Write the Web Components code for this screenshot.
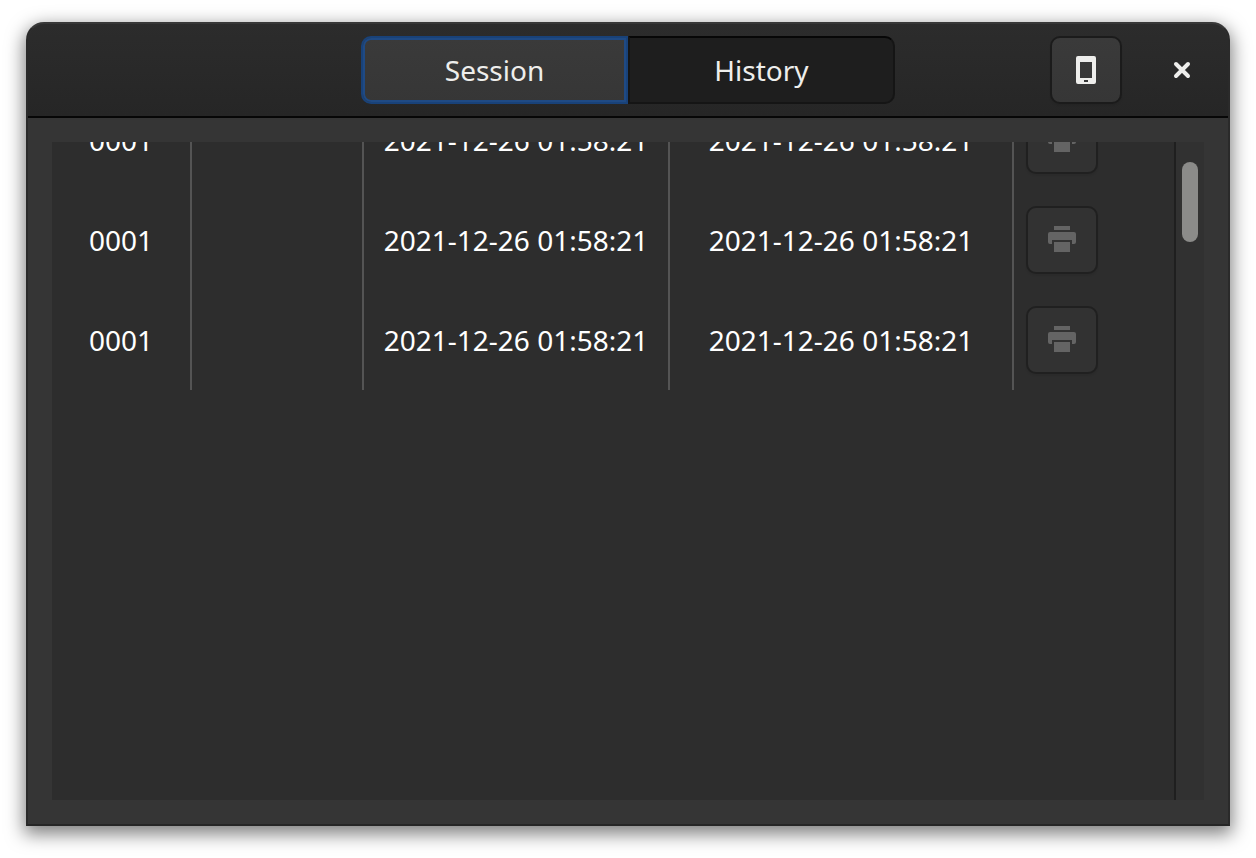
<!DOCTYPE html>
<html lang="en">
<head>
<meta charset="utf-8">
<title>Sessions</title>
<style>
    body {
        margin: 0;
        background: white;
        font-family: "Noto Sans", "Open Sans", sans-serif;
        font-size: 28px;
        line-height: 40px;
        color: white;
    }
</style>
</head>
<body>

<app-window>
    <view-switcher slot="title"></view-switcher>
    <icon-button slot="actions" name="phone" label="Devices"></icon-button>
    <icon-button slot="actions" name="close" label="Close" flat></icon-button>
    <scroll-panel offset="52">
        <session-table></session-table>
    </scroll-panel>
</app-window>

<script>
const windowTemplate = document.createElement("template");
windowTemplate.innerHTML = `
    <style>
        :host {
            display: flex;
            flex-direction: column;
            box-sizing: border-box;
            min-height: calc(100vh - 54px);
            margin: 22px 26px 32px;
            border: 2px solid #2a2a2a;
            border-top-color: #383838;
            border-bottom-color: #262626;
            border-radius: 18px 18px 0 0;
            background: #353535;
            box-shadow: 0 6px 18px 2px rgba(0, 0, 0, .5);
        }

        header {
            display: grid;
            grid-template-columns: 1fr auto 1fr;
            align-items: center;
            padding: 12px;
            border-bottom: 2px solid #070707;
            border-radius: 16px 16px 0 0;
            background: linear-gradient(#2c2c2c, #262626);
        }

        .title {
            grid-column: 2;
        }

        .actions {
            display: flex;
            justify-content: flex-end;
            gap: 26px;
        }

        main {
            display: flex;
            flex: 1;
            padding: 24px;
        }
    </style>
    <header>
        <div class="title"><slot name="title"></slot></div>
        <div class="actions"><slot name="actions"></slot></div>
    </header>
    <main><slot></slot></main>
`

class AppWindow extends HTMLElement {
    constructor() {
        super();
        this.attachShadow({ mode: "open" });
        this.shadowRoot.appendChild(windowTemplate.content.cloneNode(true));
    }
}

const switcherTemplate = document.createElement("template");
switcherTemplate.innerHTML = `
    <style>
        :host {
            display: grid;
            grid-template-columns: 1fr 1fr;
        }

        button {
            box-sizing: border-box;
            min-width: 267px;
            height: 68px;
            padding: 0 16px;
            border: 2px solid #151515;
            border-top-color: #070707;
            background: #1e1e1e;
            color: #eeeeec;
            font: inherit;
            cursor: pointer;
        }

        button:first-of-type {
            border-radius: 10px 0 0 10px;
        }

        button:last-of-type {
            border-radius: 0 10px 10px 0;
        }

        button[aria-pressed="true"] {
            border: 2px solid #194279;
            background: linear-gradient(#3a3a3a, #363636);
            box-shadow: inset 0 0 0 2px #1f4a84;
        }
    </style>
    <button type="button" aria-pressed="true">Session</button>
    <button type="button" aria-pressed="false">History</button>
`

class ViewSwitcher extends HTMLElement {
    constructor() {
        super();
        this.attachShadow({ mode: "open" });
        this.shadowRoot.appendChild(switcherTemplate.content.cloneNode(true));
    }

    select(button) {
        this.shadowRoot.querySelectorAll("button").forEach((item) => {
            item.setAttribute("aria-pressed", item === button);
        });
    }

    connectedCallback() {
        this.shadowRoot.querySelectorAll("button").forEach((button) => {
            button.addEventListener("click", () => this.select(button));
        });
    }
}

const icons = {
    phone: `<path fill-rule="evenodd" d="M6 0h16a2 2 0 0 1 2 2v24a2 2 0 0 1-2 2H6a2 2 0 0 1-2-2V2a2 2 0 0 1 2-2zM8 6v16h12V6zM12 24v2h4v-2z"/>`,
    close: `<path d="M8 8l12 12M20 8L8 20" fill="none" stroke="currentColor" stroke-width="4" stroke-linecap="round"/>`,
    printer: `<path d="M6 0h16v4H6zM2 6h24a2 2 0 0 1 2 2v8a2 2 0 0 1-2 2h-2v-4H4v4H2a2 2 0 0 1-2-2V8a2 2 0 0 1 2-2zM6 16h16v10H6z"/>`
};

const buttonTemplate = document.createElement("template");
buttonTemplate.innerHTML = `
    <style>
        :host {
            display: block;
        }

        button {
            display: flex;
            align-items: center;
            justify-content: center;
            box-sizing: border-box;
            width: 72px;
            height: 68px;
            padding: 0;
            border: 2px solid #1b1b1b;
            border-radius: 10px;
            background: linear-gradient(#3a3a3a, #363636);
            box-shadow: 0 2px 2px rgba(0, 0, 0, .07);
            color: #eeeeec;
            cursor: pointer;
        }

        button:disabled {
            border-color: #202020;
            background: #323232;
            color: #646464;
            cursor: default;
        }

        :host([flat]) button {
            width: 68px;
            border-color: transparent;
            background: none;
            box-shadow: none;
        }

        svg {
            width: 28px;
            height: 28px;
            fill: currentColor;
        }
    </style>
    <button type="button"><svg viewBox="0 0 28 28" aria-hidden="true"></svg></button>
`

class IconButton extends HTMLElement {
    constructor() {
        super();
        this.attachShadow({ mode: "open" });
        this.shadowRoot.appendChild(buttonTemplate.content.cloneNode(true));
    }

    connectedCallback() {
        const button = this.shadowRoot.querySelector("button");
        button.setAttribute("aria-label", this.getAttribute("label"));
        button.disabled = this.hasAttribute("disabled");
        this.shadowRoot.querySelector("svg").innerHTML = icons[this.getAttribute("name")];
    }
}

const panelTemplate = document.createElement("template");
panelTemplate.innerHTML = `
    <style>
        :host {
            display: flex;
            flex: 1;
            min-width: 0;
            background: #2d2d2d;
        }

        /* height comes from the panel, the rows scroll inside it */
        .view {
            flex: 1;
            min-width: 0;
            height: 0;
            min-height: 100%;
            overflow: auto;
            scrollbar-width: none;
        }

        .content {
            min-height: calc(100% + 52px);
        }

        .track {
            padding: 20px 6px;
            border-left: 2px solid #1f1f1f;
            background: #313131;
        }

        .thumb {
            width: 16px;
            height: 80px;
            border-radius: 8px;
            background: #8b8b89;
        }
    </style>
    <div class="view"><div class="content"><slot></slot></div></div>
    <div class="track"><div class="thumb"></div></div>
`

class ScrollPanel extends HTMLElement {
    constructor() {
        super();
        this.attachShadow({ mode: "open" });
        this.shadowRoot.appendChild(panelTemplate.content.cloneNode(true));
    }

    connectedCallback() {
        const view = this.shadowRoot.querySelector(".view");
        window.addEventListener("DOMContentLoaded", () => {
            view.scrollTop = this.getAttribute("offset");
        });
    }
}

const tableTemplate = document.createElement("template");
tableTemplate.innerHTML = `
    <style>
        :host {
            display: block;
        }

        table {
            width: 100%;
            table-layout: fixed;
            border-collapse: separate;
            border-spacing: 0;
        }

        .id { width: 140px; }
        .name { width: 172px; }
        .start { width: 306px; }
        .end { width: 344px; }

        td {
            box-sizing: border-box;
            height: 100px;
            padding: 0;
            border-right: 2px solid #545454;
            text-align: center;
            white-space: nowrap;
        }

        td:last-child {
            padding-left: 12px;
            border-right: none;
        }
    </style>
    <table aria-label="Sessions">
        <colgroup>
            <col class="id"><col class="name"><col class="start"><col class="end"><col>
        </colgroup>
        <tbody></tbody>
    </table>
`

const sessions = [
    ["0001", "", "2021-12-26 01:58:21", "2021-12-26 01:58:21"],
    ["0001", "", "2021-12-26 01:58:21", "2021-12-26 01:58:21"],
    ["0001", "", "2021-12-26 01:58:21", "2021-12-26 01:58:21"]
];

class SessionTable extends HTMLElement {
    constructor() {
        super();
        this.attachShadow({ mode: "open" });
        this.shadowRoot.appendChild(tableTemplate.content.cloneNode(true));
    }

    connectedCallback() {
        this.shadowRoot.querySelector("tbody").innerHTML = sessions.map((row) => `
            <tr>
                ${row.map((value) => `<td>${value}</td>`).join("")}
                <td><icon-button name="printer" label="Print" disabled></icon-button></td>
            </tr>
        `).join("");
    }
}

window.customElements.define("app-window", AppWindow);
window.customElements.define("view-switcher", ViewSwitcher);
window.customElements.define("icon-button", IconButton);
window.customElements.define("session-table", SessionTable);
window.customElements.define("scroll-panel", ScrollPanel);
</script>
</body>
</html>
